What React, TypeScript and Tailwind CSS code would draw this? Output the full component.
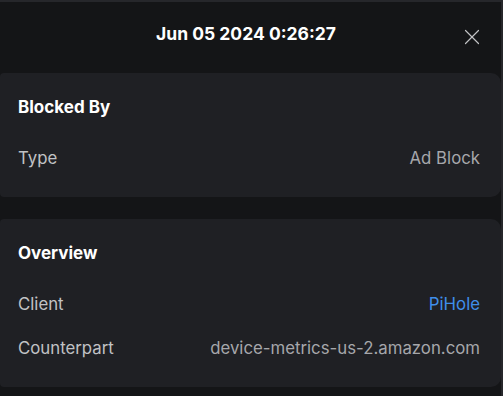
import { X } from 'lucide-react';

const font = { fontFamily: 'Inter, "Noto Sans", sans-serif' };

function Row({ label, value, link }: { label: string; value: string; link?: boolean }) {
  return (
    <div className="h-[44px] flex items-center justify-between">
      <span className="text-[16.8px] text-[#c1c2c5]">{label}</span>
      <span className={link ? 'text-[16.8px] text-[#3f8ee9]' : 'text-[16.8px] text-[#a6a7ab]'}>{value}</span>
    </div>
  );
}

function Card({ title, children }: { title: string; children: React.ReactNode }) {
  return (
    <div className="bg-[#1f2024] rounded-r-[10px] rounded-l-[4px] pl-[18px] pr-[21px] pt-[13px] pb-[16px]">
      <div className="h-[44px] flex items-center text-[17px] font-bold text-white">{title}</div>
      <div className="mt-[7px]">{children}</div>
    </div>
  );
}

export default function App() {
  return (
    <div className="w-[503px] h-[396px] bg-[#26272b] pt-[2px] overflow-hidden" style={font}>
      <div className="w-[501px] h-[394px] bg-[#141517]">
        {/* Header */}
        <div className="relative h-[71px] flex items-center">
          <div className="w-full pr-[9px] pb-[6px] text-center text-[17.5px] font-bold text-white">
            Jun 05 2024 0:26:27
          </div>
          <button className="absolute left-[459px] top-[22px] w-[26px] h-[26px] flex items-center justify-center text-[#c1c2c5]">
            <X size={26} strokeWidth={1.1} />
          </button>
        </div>

        <div className="flex flex-col gap-[22px]">
          <Card title="Blocked By">
            <Row label="Type" value="Ad Block" />
          </Card>
          <Card title="Overview">
            <Row label="Client" value="PiHole" link />
            <Row label="Counterpart" value="device-metrics-us-2.amazon.com" />
          </Card>
        </div>
      </div>
    </div>
  );
}
